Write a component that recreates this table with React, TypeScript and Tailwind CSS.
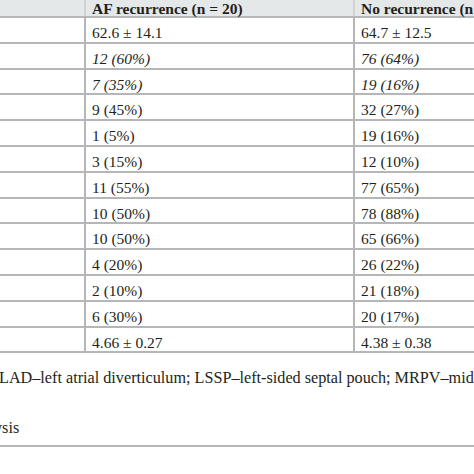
const rows: [string, string, boolean][] = [
  ["62.6 ± 14.1", "64.7 ± 12.5", false],
  ["12 (60%)", "76 (64%)", true],
  ["7 (35%)", "19 (16%)", true],
  ["9 (45%)", "32 (27%)", false],
  ["1 (5%)", "19 (16%)", false],
  ["3 (15%)", "12 (10%)", false],
  ["11 (55%)", "77 (65%)", false],
  ["10 (50%)", "78 (88%)", false],
  ["10 (50%)", "65 (66%)", false],
  ["4 (20%)", "26 (22%)", false],
  ["2 (10%)", "21 (18%)", false],
  ["6 (30%)", "20 (17%)", false],
  ["4.66 ± 0.27", "4.38 ± 0.38", false],
]

export default function App() {
  return (
    <div
      className="w-[474px] h-[474px] overflow-hidden bg-white text-[#231f20]"
      style={{ fontFamily: '"Liberation Serif", "DejaVu Serif", serif' }}
    >
      <div className="w-[700px]">
        {/* header, top part cropped off */}
        <div className="grid grid-cols-[86px_269px_345px] h-[18px] bg-[#e5e8e8] border-b-2 border-[#b4b6b8]">
          <div className="border-r-2 border-[#d0d2d3]" />
          <div className="border-r-2 border-[#d0d2d3] pl-[6px] text-[15.5px] font-bold leading-[15px] flex items-end">
            AF recurrence (n = 20)
          </div>
          <div className="pl-[6px] text-[15.5px] font-bold leading-[15px] flex items-end">
            No recurrence (n = 118)
          </div>
        </div>
        {rows.map(([a, b, it], i) => (
          <div
            key={i}
            className="grid grid-cols-[86px_269px_345px] h-[25.8px] border-b-2 border-[#b4b6b8]"
          >
            <div className="border-r-2 border-[#b4b6b8]" />
            <div className={`border-r-2 border-[#b4b6b8] pl-[6px] pt-[6px] text-[15.5px] leading-[18px] ${it ? "italic" : ""}`}>
              {a}
            </div>
            <div className={`pl-[6px] pt-[6px] text-[15.5px] leading-[18px] ${it ? "italic" : ""}`}>
              {b}
            </div>
          </div>
        ))}
        {/* footnotes */}
        <div className="pt-[16px] text-[16.2px] leading-[18px] whitespace-nowrap -ml-[1px]">
          LAD–left atrial diverticulum; LSSP–left-sided septal pouch; MRPV–middle right pulmonary vein
        </div>
        <div className="pt-[32px] text-[16.2px] leading-[18px] whitespace-nowrap -ml-[6px]">
          ysis
        </div>
        <div className="mt-[8px] border-b-2 border-[#b4b6b8]" />
      </div>
    </div>
  )
}
